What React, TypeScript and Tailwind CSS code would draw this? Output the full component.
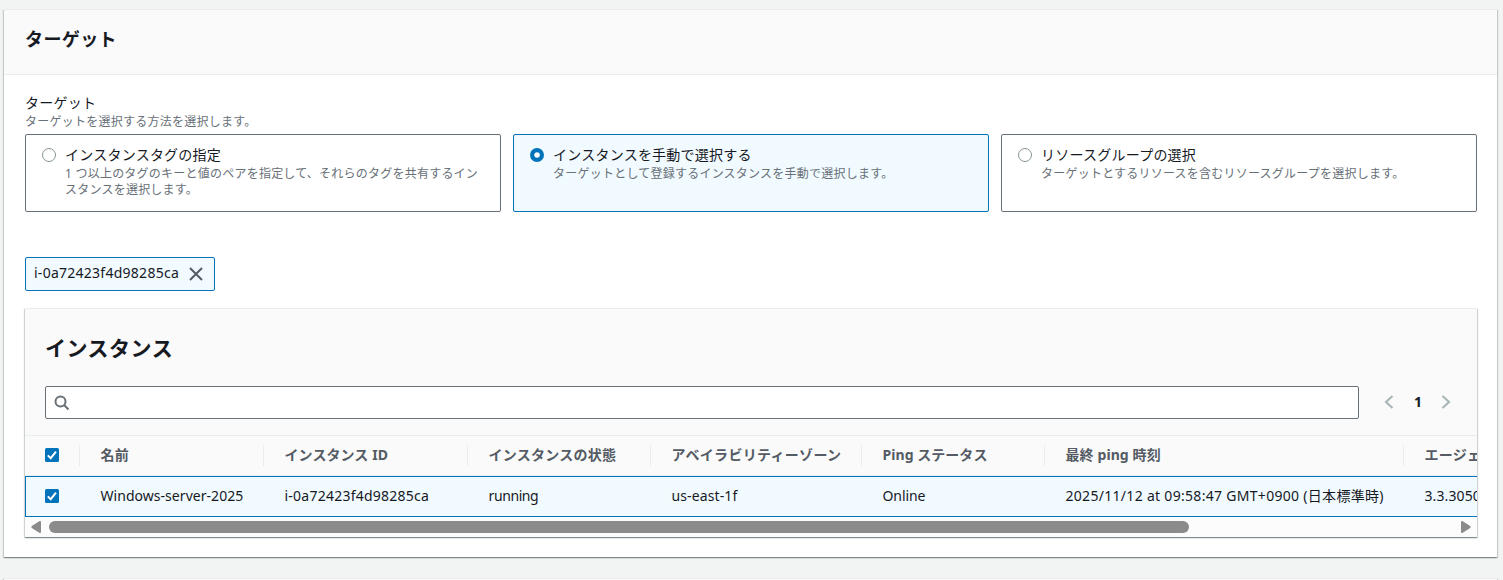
import React from "react";

const TILES = [
  {
    title: "インスタンスタグの指定",
    desc: "1 つ以上のタグのキーと値のペアを指定して、それらのタグを共有するインスタンスを選択します。",
    selected: false,
  },
  {
    title: "インスタンスを手動で選択する",
    desc: "ターゲットとして登録するインスタンスを手動で選択します。",
    selected: true,
  },
  {
    title: "リソースグループの選択",
    desc: "ターゲットとするリソースを含むリソースグループを選択します。",
    selected: false,
  },
];

const COLUMNS = [
  {
    label: "名前",
    value: "Windows-server-2025",
    width: "w-[184px]",
    head: "tracking-[0.25px]",
    cell: "tracking-[0.04px]",
  },
  {
    label: "インスタンス ID",
    value: "i-0a72423f4d98285ca",
    width: "w-[204px]",
    head: "tracking-[0.08px]",
    cell: "tracking-[0.24px]",
  },
  {
    label: "インスタンスの状態",
    value: "running",
    width: "w-[183px]",
    head: "tracking-[0.25px]",
    cell: "tracking-[-0.4px]",
  },
  {
    label: "アベイラビリティーゾーン",
    value: "us-east-1f",
    width: "w-[211px]",
    head: "tracking-[0.3px]",
    cell: "tracking-[0.12px]",
  },
  {
    label: "Ping ステータス",
    value: "Online",
    width: "w-[183px]",
    head: "tracking-[0.05px]",
    cell: "tracking-[-0.1px]",
  },
  {
    label: "最終 ping 時刻",
    value: "2025/11/12 at 09:58:47 GMT+0900 (日本標準時)",
    width: "w-[359px]",
    head: "tracking-[0.1px]",
    cell: "tracking-[0.3px]",
  },
  {
    label: "エージェントバージョン",
    value: "3.3.3050.0",
    width: "w-[184px]",
    head: "tracking-[0.25px]",
    cell: "tracking-[0.1px]",
  },
];

const CARD_SHADOW =
  "shadow-[0_1px_1px_0_rgba(0,28,36,0.3),1px_1px_1px_0_rgba(0,28,36,0.15),-1px_1px_1px_0_rgba(0,28,36,0.15)]";

function Radio({ checked }: { checked: boolean }) {
  return (
    <svg className="w-[14px] h-[14px] shrink-0 mt-[2px]" viewBox="0 0 14 14">
      {checked ? (
        <circle cx="7" cy="7" r="4.9" fill="#fff" stroke="#0073bb" strokeWidth="4.2" />
      ) : (
        <circle cx="7" cy="7" r="6.5" fill="#fff" stroke="#879596" />
      )}
    </svg>
  );
}

function Checkbox() {
  return (
    <svg className="w-[14px] h-[14px] block" viewBox="0 0 14 14">
      <rect width="14" height="14" rx="1.5" fill="#0073bb" />
      <path d="M2.8 7.4 5.7 10.2 11 3.6" fill="none" stroke="#fff" strokeWidth="2" />
    </svg>
  );
}

function Tile({ title, desc, selected }: { title: string; desc: string; selected: boolean }) {
  return (
    <div
      className={`h-[78px] flex gap-[9px] pl-4 pr-4 pt-[11px] border rounded-[2px] ${
        selected ? "border-[#0073bb] bg-[#f1faff]" : "border-[#687078] bg-white"
      }`}
    >
      <Radio checked={selected} />
      <div className="flex-1 min-w-0">
        <div className="text-[14px] leading-[18px] tracking-[0.24px]">{title}</div>
        <p className="text-[12px] leading-4 tracking-[0.23px] text-[#687078] mt-[2px]">{desc}</p>
      </div>
    </div>
  );
}

function InstanceTable() {
  return (
    <div className="overflow-hidden">
      <div className="w-[1600px]">
        <div className="flex h-[41px] border-y border-[#eaeded] bg-[#fafafa] items-center">
          <div className="w-[55px] pl-5 shrink-0 -mt-px">
            <Checkbox />
          </div>
          {COLUMNS.map((col) => (
            <div
              key={col.label}
              className={`${col.width} ${col.head} h-[21px] shrink-0 border-l border-[#eaeded] -ml-px mr-px pl-[20.5px] text-[14px] leading-[20px] font-bold text-[#545b64] whitespace-nowrap`}
            >
              {col.label}
            </div>
          ))}
        </div>
        <div className="flex h-[41px] border border-[#0073bb] bg-[#f1faff] items-center">
          <div className="w-[54px] pl-[19px] shrink-0 -mt-px">
            <Checkbox />
          </div>
          {COLUMNS.map((col) => (
            <div
              key={col.label}
              className={`${col.width} ${col.cell} shrink-0 pl-[20.5px] -mt-[2px] text-[14px] leading-[22px] whitespace-nowrap`}
            >
              {col.value}
            </div>
          ))}
        </div>
      </div>
    </div>
  );
}

function Scrollbar() {
  return (
    <div className="h-5 flex items-center bg-[#fcfcfc] pl-[6px] pr-[6px]">
      <svg className="w-[10px] h-3" viewBox="0 0 10 12">
        <path d="M8.2.3Q10-.6 10 1.300v9.400q0 1.900-1.800 1L.8 7Q0 6 .8 5Z" fill="#8b8b8b" />
      </svg>
      <div className="w-[1140px] h-3 ml-2 rounded-full bg-[#8b8b8b]" />
      <svg className="w-[10px] h-3 ml-auto" viewBox="0 0 10 12">
        <path d="M1.800.3Q0-.6 0 1.300v9.400q0 1.900 1.800 1L9.200 7Q10 6 9.200 5Z" fill="#8b8b8b" />
      </svg>
    </div>
  );
}

export default function App() {
  return (
    <div
      lang="ja"
      className="w-full h-[580px] overflow-hidden bg-[#f2f3f3] pt-[9px] pl-1 pr-[6px] text-[#16191f] font-['Noto_Sans','Noto_Sans_CJK_JP',sans-serif]"
    >
      <section className={`h-[548px] bg-white border-t border-[#eaeded] ${CARD_SHADOW}`}>
        <header className="h-[65px] pl-[21px] pt-[18px] bg-[#fafafa] border-b border-[#eaeded]">
          <h2 className="text-[18px] leading-[22px] font-bold tracking-[0.4px]">ターゲット</h2>
        </header>

        <div className="pl-[21px] pr-5 pt-[18px]">
          <div className="text-[14px] leading-[20px] tracking-[0.22px]">ターゲット</div>
          <div className="text-[12px] leading-4 tracking-[0.25px] text-[#687078] mt-px">
            ターゲットを選択する方法を選択します。
          </div>

          <div className="grid grid-cols-3 gap-3 mt-1">
            {TILES.map((tile) => (
              <Tile key={tile.title} {...tile} />
            ))}
          </div>

          <div className="mt-[45px] w-[190px] h-[34px] flex items-center border border-[#0073bb] rounded-[2px] bg-[#f1faff] pl-2">
            <span className="w-[146px] -mt-[2px] text-[14px] leading-[22px] tracking-[0.26px] whitespace-nowrap">
              i-0a72423f4d98285ca
            </span>
            <svg className="w-4 h-4 ml-2" viewBox="0 0 16 16">
              <path d="M2 2 14 14M14 2 2 14" stroke="#545b64" strokeWidth="2" />
            </svg>
          </div>

          <section className={`mt-[17px] h-[229px] border-t border-[#eaeded] bg-[#fafafa] ${CARD_SHADOW}`}>
            <div className="h-[126px] pl-5 pt-[25px]">
              <h3 className="text-[21px] leading-[28px] font-bold tracking-[0.5px]">インスタンス</h3>
              <div className="flex items-center mt-[24px]">
                <div className="w-[1314px] h-[33px] bg-white border border-[#687078] rounded-[2px] flex items-center pl-2">
                  <svg className="w-4 h-4" viewBox="0 0 16 16" fill="none" stroke="#687078" strokeWidth="2">
                    <circle cx="6.5" cy="6.5" r="5" />
                    <path d="M10 10 14.500 14.500" />
                  </svg>
                </div>
                <svg className="w-4 h-4 ml-[22px] -mt-px" viewBox="0 0 16 16" fill="none" stroke="#aab7b8" strokeWidth="2.2">
                  <path d="M11.500 2 5 8l6.500 6" />
                </svg>
                <span className="w-[41px] pl-px -mt-[2px] text-center text-[14px] leading-[22px] font-bold">1</span>
                <svg className="w-4 h-4 -mt-px" viewBox="0 0 16 16" fill="none" stroke="#aab7b8" strokeWidth="2.2">
                  <path d="m4.500 2 6.500 6-6.500 6" />
                </svg>
              </div>
            </div>
            <InstanceTable />
            <Scrollbar />
          </section>
        </div>
      </section>

      {/* top edge of the next container */}
      <section className={`mt-[21px] h-10 bg-[#fafafa] border-t border-[#eaeded] ${CARD_SHADOW}`} />
    </div>
  );
}
